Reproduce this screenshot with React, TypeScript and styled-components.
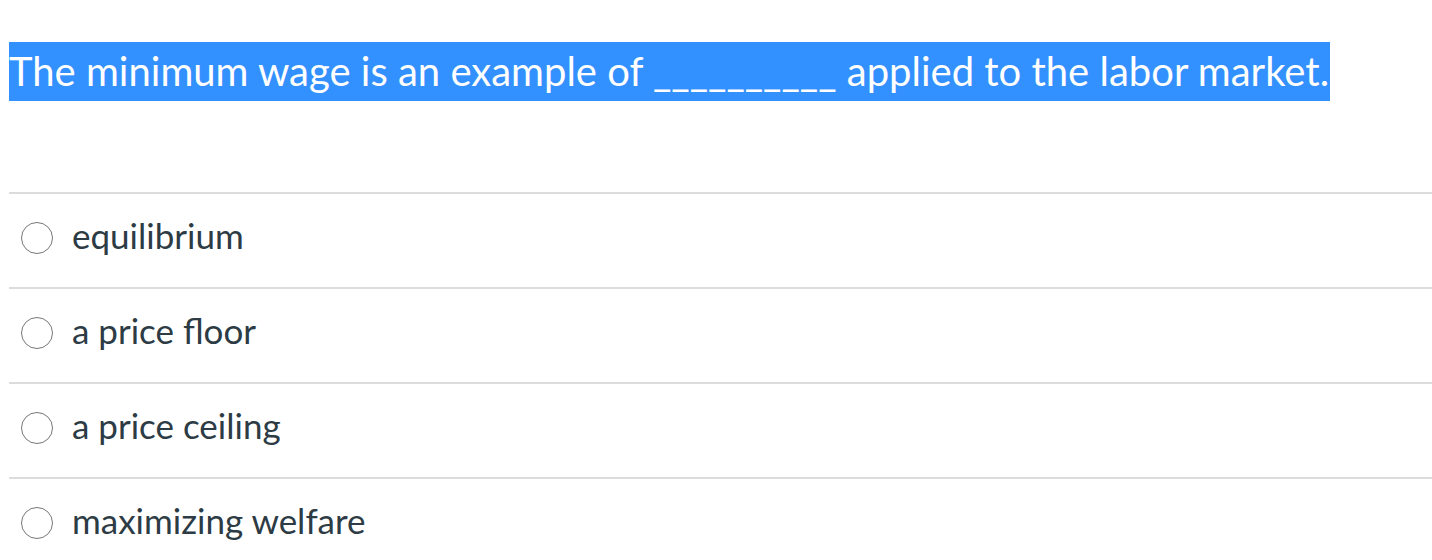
import React from 'react';
import styled, { createGlobalStyle } from 'styled-components';

const Global = createGlobalStyle`
    body {
        margin: 0;
        background: #fff;
        font-family: Lato, 'Liberation Sans', sans-serif;
    }
`;

const Page = styled.div`
    padding: 42px 0 0 9px;
`;

const Question = styled.div`
    margin-bottom: 91px;
    font-size: 40px;
    line-height: 59px;
    height: 59px;
    white-space: nowrap;
`;

const Highlight = styled.span`
    display: inline-block;
    background: #3390ff;
    color: #fff;
    padding-right: 1px;
`;

const Options = styled.div`
    display: flex;
    flex-direction: column;
`;

const Option = styled.label`
    display: flex;
    align-items: center;
    gap: 19px;
    border-top: 2px solid #dcdcdc;
    padding-left: 12px;
    padding-bottom: 12px;
    height: 81px;
    color: #2d3b45;
    font-size: 35px;
    line-height: 40px;
    cursor: pointer;
`;

const Radio = styled.span`
    width: 32px;
    height: 32px;
    border: 1px solid #777;
    border-radius: 50%;
    box-sizing: border-box;
    flex-shrink: 0;
    margin-top: 6px;
`;

const answers = ['equilibrium', 'a price floor', 'a price ceiling', 'maximizing welfare'];

export default function App() {
    return (
        <Page>
            <Global />
            <Question>
                <Highlight>The minimum wage is an example of __________ applied to the labor market.</Highlight>
            </Question>
            <Options>
                {answers.map((a) => (
                    <Option key={a}>
                        <Radio />
                        {a}
                    </Option>
                ))}
            </Options>
        </Page>
    );
}
